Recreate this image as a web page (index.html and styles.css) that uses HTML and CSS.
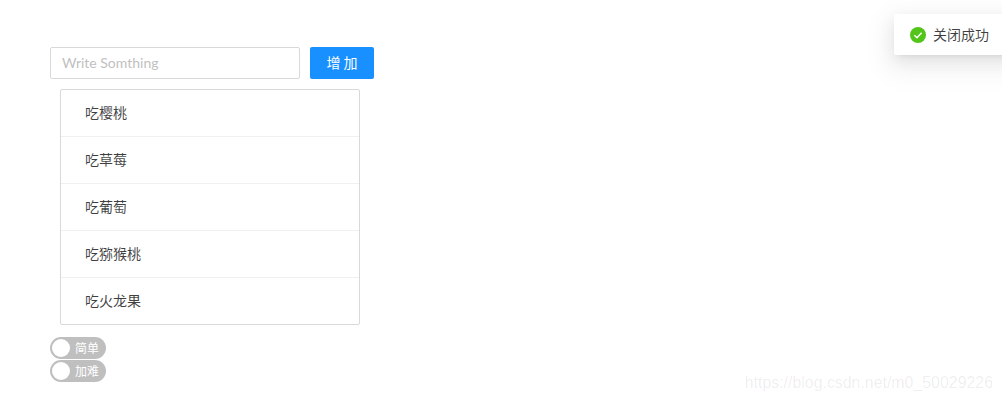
FILE: index.html
```html
<!DOCTYPE html>
<html lang="zh">
<head>
<meta charset="utf-8">
<title>Todo</title>
<link rel="stylesheet" href="styles.css">
</head>
<body>
<main class="app">
  <div class="add-row">
    <input class="add-input" type="text" placeholder="Write Somthing">
    <button class="add-btn" type="button">增 加</button>
  </div>
  <ul class="todo-list">
    <li class="todo-item"><span class="todo-text">吃樱桃</span></li>
    <li class="todo-item"><span class="todo-text">吃草莓</span></li>
    <li class="todo-item"><span class="todo-text">吃葡萄</span></li>
    <li class="todo-item"><span class="todo-text">吃猕猴桃</span></li>
    <li class="todo-item"><span class="todo-text">吃火龙果</span></li>
  </ul>
  <div class="switches">
    <div class="switch"><span class="knob"></span><span class="switch-label">简单</span></div>
    <div class="switch"><span class="knob"></span><span class="switch-label">加难</span></div>
  </div>
</main>
<div class="toast">
  <svg class="toast-icon" viewBox="0 0 16 16" aria-hidden="true">
    <circle cx="8" cy="8" r="8" fill="#52c41a"/>
    <path d="M4.4 8.2 7 10.7 11.6 5.8" fill="none" stroke="#fff" stroke-width="1.5"/>
  </svg>
  <span class="toast-text">关闭成功</span>
</div>
<div class="watermark">https://blog.csdn.net/m0_50029226</div>
</body>
</html>
```
FILE: styles.css
```css
* { box-sizing: border-box; }
html, body { height: 100%; }
body {
  margin: 0;
  overflow: hidden;
  background: #fff;
  color: rgba(0, 0, 0, 0.75);
  font-family: "Noto Sans CJK SC", "Open Sans", sans-serif;
  font-size: 14px;
}
.app { padding: 47px 0 0 50px; width: 400px; }
.add-row { display: flex; gap: 10px; }
.add-input {
  width: 250px;
  height: 32px;
  padding: 0 11px 2px;
  border: 1px solid #d9d9d9;
  border-radius: 2px;
  font: 14px "Lato", sans-serif;
  outline: none;
}
.add-input::placeholder { color: #bfbfbf; opacity: 1; }
.add-btn {
  width: 64px;
  height: 32px;
  padding: 0 0 2px;
  border: 0;
  border-radius: 2px;
  background: #1890ff;
  color: #fff;
  font: 14px "Noto Sans CJK SC", sans-serif;
}
.todo-list {
  width: 300px;
  margin: 10px 0 0 10px;
  padding: 0;
  list-style: none;
  border: 1px solid #d9d9d9;
  border-radius: 2px;
}
.todo-item {
  height: 47px;
  padding: 0 24px 2px;
  display: flex;
  align-items: center;
  border-bottom: 1px solid #f0f0f0;
  line-height: 1;
}
.todo-item:last-child { border-bottom: 0; height: 46px; }
.switches { margin-top: 12px; display: flex; flex-direction: column; gap: 1px; }
.switch {
  width: 56px;
  height: 22px;
  padding: 2px;
  display: flex;
  align-items: center;
  border-radius: 11px;
  background: #bfbfbf;
  color: #fff;
  font-size: 12px;
}
.knob { width: 18px; height: 18px; flex: none; border-radius: 50%; background: #fff; }
.switch-label { margin-left: 5px; line-height: 1; white-space: nowrap; }
.toast {
  position: absolute;
  top: 14px;
  left: 894px;
  width: 125px;
  height: 41px;
  padding-left: 16px;
  display: flex;
  align-items: center;
  gap: 7px;
  border-radius: 2px;
  background: #fff;
  box-shadow: 0 3px 6px -4px rgba(0,0,0,.12), 0 6px 16px rgba(0,0,0,.08), 0 9px 28px 8px rgba(0,0,0,.05);
  line-height: 1;
}
.toast-icon { width: 16px; height: 16px; flex: none; }
.toast-text { margin-top: -2px; }
.watermark {
  position: absolute;
  right: 9px;
  bottom: 9px;
  color: rgba(0, 0, 0, 0.08);
  font: 15.9px "Liberation Sans", sans-serif;
  white-space: nowrap;
}
```
